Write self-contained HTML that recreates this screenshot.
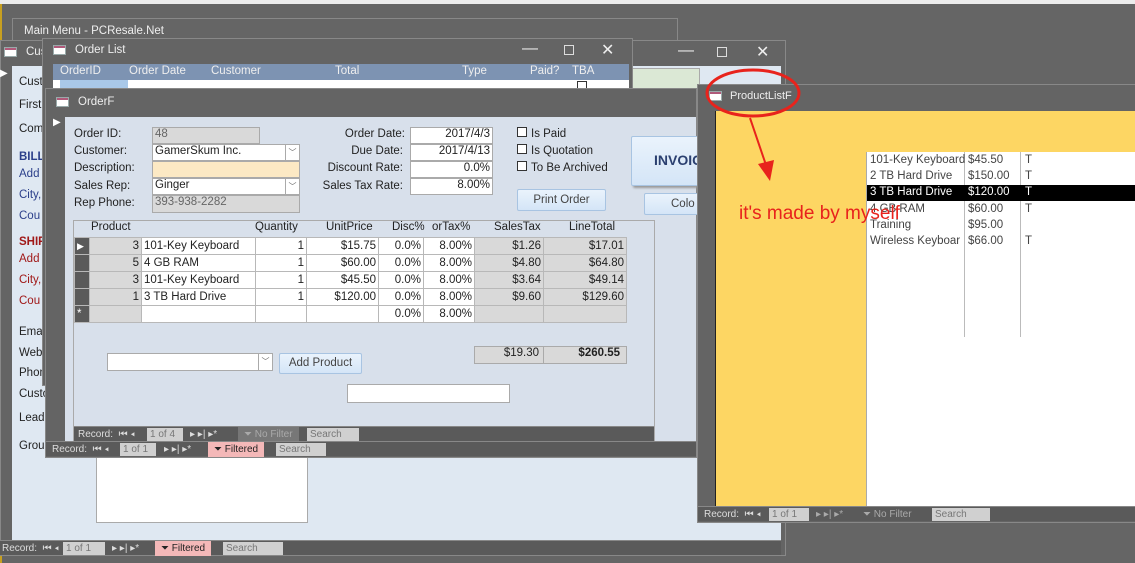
<!DOCTYPE html>
<html><head><meta charset="utf-8">
<style>
*{margin:0;padding:0;box-sizing:border-box}
body{width:1135px;height:563px;background:#656565;position:relative;overflow:hidden;font-family:"Liberation Sans",sans-serif;font-size:11.5px;color:#222}
.a{position:absolute}
.t{position:absolute;white-space:nowrap}
.w{color:#eee}
.box{position:absolute;background:#fff;border:1px solid #aaa}
.gbox{position:absolute;background:#d9d9d9;border:1px solid #aaa}
.r{text-align:right}
.rec{position:absolute;height:15px;background:#5a5a5a;color:#ddd;font-size:10px;line-height:15px;border-top:1px solid #888}
.rec span{position:absolute;top:0}
.fld{position:absolute;background:#d0d0d0;color:#777;height:13px;top:1px;padding-left:3px;line-height:13px}
.btn{position:absolute;background:linear-gradient(#eaf3fc,#d4e5f7);border:1px solid #a8c4e2;border-radius:2px;color:#444;text-align:center}
.ico{position:absolute;width:13px;height:10px;border:1px solid #9aa;background:#fff}
.ico:before{content:"";position:absolute;left:0;top:0;width:11px;height:2px;background:#b05a7a}
.cb{position:absolute;width:10px;height:10px;border:1px solid #333;background:#fff}
td{border:1px solid #b8b8b8;padding:0 2px;height:17px;font-size:11.5px;overflow:hidden;white-space:nowrap}
table{border-collapse:collapse;position:absolute;table-layout:fixed}
</style></head><body>
<div class="a" style="left:0;top:0;width:1135px;height:4px;background:#ececec"></div>
<div class="a" style="left:0;top:4px;width:2px;height:559px;background:#c8a020"></div>
<div class="a" style="left:12px;top:18px;width:666px;height:30px;border:1px solid #888;border-bottom:none"></div>
<div class="t w" style="left:24px;top:25px">Main Menu - PCResale.Net</div>
<div class="a" style="left:0;top:40px;width:786px;height:516px;background:#646464;border:1px solid #888"></div>
<div class="ico" style="left:4px;top:47px"></div>
<div class="t w" style="left:26px;top:46px">Cus</div>
<div class="t w" style="left:678px;top:42px;font-size:16px">—</div>
<div class="a" style="left:717px;top:47px;width:10px;height:10px;border:1px solid #ddd"></div>
<div class="t w" style="left:756px;top:42px;font-size:16px">✕</div>
<div class="a" style="left:12px;top:66px;width:769px;height:474px;background:#dfe8f2"></div>
<div class="a" style="left:630px;top:68px;width:70px;height:27px;background:#dbe8d5;border:1px solid #aaa"></div>
<div class="t" style="left:0;top:68px;color:#fff;font-size:10px">▶</div>
<div class="t" style="left:19px;top:76px">Cust</div>
<div class="t" style="left:19px;top:99px">First</div>
<div class="t" style="left:19px;top:123px">Com</div>
<div class="t" style="left:19px;top:151px;color:#2b3f8a;font-weight:bold">BILL</div>
<div class="t" style="left:19px;top:168px;color:#2b3f8a">Add</div>
<div class="t" style="left:19px;top:189px;color:#2b3f8a">City,</div>
<div class="t" style="left:19px;top:210px;color:#2b3f8a">Cou</div>
<div class="t" style="left:19px;top:236px;color:#a01818;font-weight:bold">SHIP</div>
<div class="t" style="left:19px;top:253px;color:#a01818">Add</div>
<div class="t" style="left:19px;top:274px;color:#a01818">City,</div>
<div class="t" style="left:19px;top:295px;color:#a01818">Cou</div>
<div class="t" style="left:19px;top:326px">Ema</div>
<div class="t" style="left:19px;top:347px">Web</div>
<div class="t" style="left:19px;top:367px">Phon</div>
<div class="t" style="left:19px;top:388px">Custo</div>
<div class="t" style="left:19px;top:412px">Lead</div>
<div class="t" style="left:19px;top:440px">Grou</div>
<div class="box" style="left:96px;top:456px;width:212px;height:67px"></div>
<div class="rec" style="left:0;top:540px;width:781px">
<span style="left:2px">Record:&nbsp; ⏮ ◂</span><div class="fld" style="left:63px;width:42px">1 of 1</div><span style="left:112px">▸ ▸| ▸*</span>
<span style="left:155px;background:#f4b8b8;color:#222;padding:0 6px">⏷ Filtered</span><div class="fld" style="left:223px;width:60px">Search</div></div>
<div class="a" style="left:42px;top:38px;width:591px;height:348px;background:#646464;border:1px solid #888"></div>
<div class="ico" style="left:53px;top:45px"></div>
<div class="t w" style="left:75px;top:44px">Order List</div>
<div class="t w" style="left:522px;top:40px;font-size:16px">—</div>
<div class="a" style="left:564px;top:45px;width:10px;height:10px;border:1px solid #ddd"></div>
<div class="t w" style="left:601px;top:40px;font-size:16px">✕</div>
<div class="a" style="left:53px;top:64px;width:576px;height:16px;background:#7d93b2"></div>
<div class="a" style="left:53px;top:80px;width:576px;height:10px;background:#fff"></div>
<div class="a" style="left:60px;top:80px;width:68px;height:10px;background:#a9c8e8"></div>
<div class="t w" style="left:60px;top:65px">OrderID</div>
<div class="t w" style="left:129px;top:65px">Order Date</div>
<div class="t w" style="left:211px;top:65px">Customer</div>
<div class="t w" style="left:335px;top:65px">Total</div>
<div class="t w" style="left:462px;top:65px">Type</div>
<div class="t w" style="left:530px;top:65px">Paid?</div>
<div class="t w" style="left:572px;top:65px">TBA</div>
<div class="cb" style="left:577px;top:81px"></div>
<div class="a" style="left:45px;top:88px;width:652px;height:370px;background:#646464;border:1px solid #888"></div>
<div class="ico" style="left:56px;top:97px"></div>
<div class="t w" style="left:78px;top:96px">OrderF</div>
<div class="a" style="left:65px;top:117px;width:631px;height:324px;background:#d8e0eb"></div>
<div class="t" style="left:53px;top:117px;color:#fff;font-size:10px">▶</div>
<div class="t" style="left:74px;top:128px">Order ID:</div>
<div class="t" style="left:74px;top:145px">Customer:</div>
<div class="t" style="left:74px;top:162px">Description:</div>
<div class="t" style="left:74px;top:180px">Sales Rep:</div>
<div class="t" style="left:74px;top:197px">Rep Phone:</div>
<div class="gbox" style="left:152px;top:127px;width:108px;height:17px;color:#666;padding-left:2px">48</div>
<div class="box" style="left:152px;top:144px;width:148px;height:17px;padding-left:2px">GamerSkum Inc.<span style="position:absolute;right:0;top:0;width:14px;height:15px;border-left:1px solid #aaa;font-size:8px;text-align:center;line-height:15px;color:#666">﹀</span></div>
<div class="a" style="left:152px;top:161px;width:148px;height:17px;background:#fce9c4;border:1px solid #aaa"></div>
<div class="box" style="left:152px;top:178px;width:148px;height:17px;padding-left:2px">Ginger<span style="position:absolute;right:0;top:0;width:14px;height:15px;border-left:1px solid #aaa;font-size:8px;text-align:center;line-height:15px;color:#666">﹀</span></div>
<div class="gbox" style="left:152px;top:195px;width:148px;height:18px;color:#666;padding-left:2px">393-938-2282</div>
<div class="t r" style="left:300px;top:128px;width:105px">Order Date:</div>
<div class="t r" style="left:300px;top:145px;width:103px">Due Date:</div>
<div class="t r" style="left:300px;top:162px;width:103px">Discount Rate:</div>
<div class="t r" style="left:300px;top:180px;width:103px">Sales Tax Rate:</div>
<div class="box r" style="left:410px;top:127px;width:83px;height:17px;padding-right:2px">2017/4/3</div>
<div class="box r" style="left:410px;top:144px;width:83px;height:17px;padding-right:2px">2017/4/13</div>
<div class="box r" style="left:410px;top:161px;width:83px;height:17px;padding-right:2px">0.0%</div>
<div class="box r" style="left:410px;top:178px;width:83px;height:17px;padding-right:2px">8.00%</div>
<div class="cb" style="left:517px;top:127px"></div><div class="t" style="left:531px;top:128px">Is Paid</div>
<div class="cb" style="left:517px;top:144px"></div><div class="t" style="left:531px;top:145px">Is Quotation</div>
<div class="cb" style="left:517px;top:161px"></div><div class="t" style="left:531px;top:162px">To Be Archived</div>
<div class="btn" style="left:517px;top:189px;width:89px;height:22px;line-height:20px">Print Order</div>
<div class="btn" style="left:631px;top:136px;width:70px;height:50px;line-height:46px;font-weight:bold;font-size:14px;color:#2b4070;text-align:left;padding-left:22px;box-shadow:2px 2px 2px #999">INVOIC</div>
<div class="btn" style="left:644px;top:193px;width:60px;height:22px;line-height:20px;text-align:left;padding-left:26px">Colo</div>
<div class="a" style="left:73px;top:220px;width:582px;height:221px;background:#d8e0eb;border:1px solid #aaa"></div>
<div class="t" style="left:91px;top:221px">Product</div>
<div class="t" style="left:255px;top:221px">Quantity</div>
<div class="t" style="left:326px;top:221px">UnitPrice</div>
<div class="t" style="left:392px;top:221px">Disc%</div>
<div class="t" style="left:432px;top:221px">orTax%</div>
<div class="t" style="left:494px;top:221px">SalesTax</div>
<div class="t" style="left:569px;top:221px">LineTotal</div>
<table style="left:74px;top:237px;width:552px">
<colgroup><col style="width:15px"><col style="width:52px"><col style="width:114px"><col style="width:51px"><col style="width:72px"><col style="width:45px"><col style="width:51px"><col style="width:69px"><col style="width:83px"></colgroup>
<tr><td style="background:#5a5a5a;color:#fff;font-size:9px">▶</td><td class="r" style="background:#d9d9d9">3</td><td style="background:#fff">101-Key Keyboard</td><td class="r" style="background:#fff">1</td><td class="r" style="background:#fff">$15.75</td><td class="r" style="background:#fff">0.0%</td><td class="r" style="background:#fff">8.00%</td><td class="r" style="background:#d9d9d9">$1.26</td><td class="r" style="background:#d9d9d9">$17.01</td></tr>
<tr><td style="background:#5a5a5a"></td><td class="r" style="background:#d9d9d9">5</td><td style="background:#fff">4 GB RAM</td><td class="r" style="background:#fff">1</td><td class="r" style="background:#fff">$60.00</td><td class="r" style="background:#fff">0.0%</td><td class="r" style="background:#fff">8.00%</td><td class="r" style="background:#d9d9d9">$4.80</td><td class="r" style="background:#d9d9d9">$64.80</td></tr>
<tr><td style="background:#5a5a5a"></td><td class="r" style="background:#d9d9d9">3</td><td style="background:#fff">101-Key Keyboard</td><td class="r" style="background:#fff">1</td><td class="r" style="background:#fff">$45.50</td><td class="r" style="background:#fff">0.0%</td><td class="r" style="background:#fff">8.00%</td><td class="r" style="background:#d9d9d9">$3.64</td><td class="r" style="background:#d9d9d9">$49.14</td></tr>
<tr><td style="background:#5a5a5a"></td><td class="r" style="background:#d9d9d9">1</td><td style="background:#fff">3 TB Hard Drive</td><td class="r" style="background:#fff">1</td><td class="r" style="background:#fff">$120.00</td><td class="r" style="background:#fff">0.0%</td><td class="r" style="background:#fff">8.00%</td><td class="r" style="background:#d9d9d9">$9.60</td><td class="r" style="background:#d9d9d9">$129.60</td></tr>
<tr><td style="background:#5a5a5a;color:#fff">*</td><td style="background:#d9d9d9"></td><td style="background:#fff"></td><td style="background:#fff"></td><td style="background:#fff"></td><td class="r" style="background:#fff">0.0%</td><td class="r" style="background:#fff">8.00%</td><td style="background:#d9d9d9"></td><td style="background:#d9d9d9"></td></tr>
</table>
<div class="gbox r" style="left:474px;top:346px;width:70px;height:18px;padding-right:4px">$19.30</div>
<div class="gbox r" style="left:543px;top:346px;width:84px;height:18px;padding-right:6px;font-weight:bold">$260.55</div>
<div class="box" style="left:107px;top:353px;width:166px;height:18px"><span style="position:absolute;right:0;top:0;width:14px;height:16px;border-left:1px solid #aaa;font-size:8px;text-align:center;line-height:16px;color:#666">﹀</span></div>
<div class="btn" style="left:279px;top:353px;width:83px;height:21px;line-height:19px">Add Product</div>
<div class="box" style="left:347px;top:384px;width:163px;height:19px"></div>
<div class="rec" style="left:74px;top:426px;width:580px">
<span style="left:4px">Record:&nbsp; ⏮ ◂</span><div class="fld" style="left:73px;width:36px">1 of 4</div><span style="left:116px">▸ ▸| ▸*</span>
<span style="left:164px;background:#777;color:#aaa;padding:0 6px">⏷ No Filter</span><div class="fld" style="left:233px;width:52px">Search</div></div>
<div class="rec" style="left:46px;top:441px;width:650px">
<span style="left:6px">Record:&nbsp; ⏮ ◂</span><div class="fld" style="left:74px;width:36px">1 of 1</div><span style="left:118px">▸ ▸| ▸*</span>
<span style="left:162px;background:#f4b8b8;color:#222;padding:0 6px">⏷ Filtered</span><div class="fld" style="left:230px;width:50px">Search</div></div>
<div class="a" style="left:697px;top:84px;width:438px;height:439px;background:#646464;border:1px solid #888;border-right:none"></div>
<div class="ico" style="left:709px;top:91px"></div>
<div class="t w" style="left:730px;top:90px;font-size:11px">ProductListF</div>
<div class="a" style="left:715px;top:111px;width:420px;height:395px;background:#fdd663;border-left:1px solid #222"></div>
<div class="a" style="left:866px;top:152px;width:269px;height:354px;background:#fff;border-left:1px solid #aaa"></div>
<div class="a" style="left:964px;top:152px;width:1px;height:185px;background:#bbb"></div>
<div class="a" style="left:1020px;top:152px;width:1px;height:185px;background:#bbb"></div>
<div class="a" style="left:867px;top:185px;width:268px;height:16px;background:#000"></div>
<div class="t" style="left:870px;top:154px;color:#444">101-Key Keyboard</div><div class="t" style="left:968px;top:154px;color:#444">$45.50</div><div class="t" style="left:1025px;top:154px;color:#444">T</div>
<div class="t" style="left:870px;top:170px;color:#444">2 TB Hard Drive</div><div class="t" style="left:968px;top:170px;color:#444">$150.00</div><div class="t" style="left:1025px;top:170px;color:#444">T</div>
<div class="t" style="left:870px;top:186px;color:#fff">3 TB Hard Drive</div><div class="t" style="left:968px;top:186px;color:#fff">$120.00</div><div class="t" style="left:1025px;top:186px;color:#fff">T</div>
<div class="t" style="left:870px;top:203px;color:#444">4 GB RAM</div><div class="t" style="left:968px;top:203px;color:#444">$60.00</div><div class="t" style="left:1025px;top:203px;color:#444">T</div>
<div class="t" style="left:870px;top:219px;color:#444">Training</div><div class="t" style="left:968px;top:219px;color:#444">$95.00</div>
<div class="t" style="left:870px;top:235px;color:#444">Wireless Keyboar</div><div class="t" style="left:968px;top:235px;color:#444">$66.00</div><div class="t" style="left:1025px;top:235px;color:#444">T</div>
<div class="t" style="left:739px;top:203px;color:#e8231c;font-size:19px">it's made by myself</div>
<svg class="a" style="left:700px;top:60px" width="110" height="125"><ellipse cx="53" cy="33" rx="46" ry="23" fill="none" stroke="#e8231c" stroke-width="3"/><path d="M50 58 L67 108" stroke="#e8231c" stroke-width="2"/><path d="M58 104 L70 121 L74 100 Z" fill="#e8231c"/></svg>
<div class="rec" style="left:698px;top:506px;width:437px">
<span style="left:6px">Record:&nbsp; ⏮ ◂</span><div class="fld" style="left:71px;width:40px">1 of 1</div><span style="left:118px;color:#aaa">▸ ▸| ▸*</span>
<span style="left:165px;color:#aaa">⏷ No Filter</span><div class="fld" style="left:234px;width:58px">Search</div></div>
</body></html>
